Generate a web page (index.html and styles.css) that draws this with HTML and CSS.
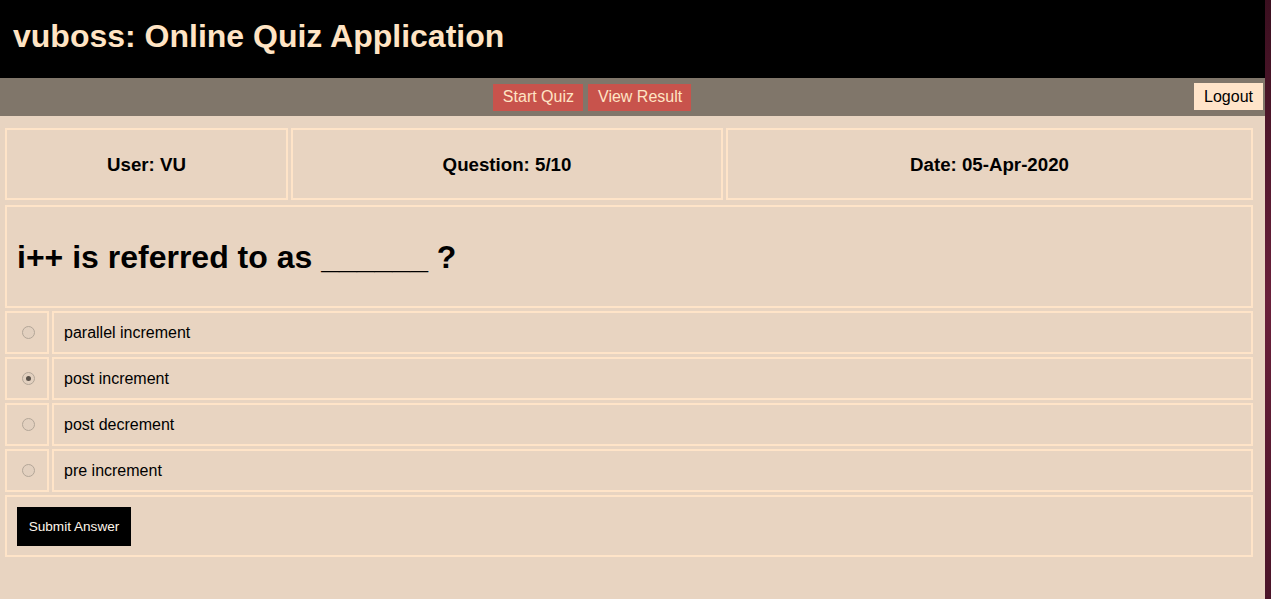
FILE: index.html
```html
<!DOCTYPE html>
<html>
<head>
<meta charset="utf-8">
<title>vuboss: Online Quiz Application</title>
<link rel="stylesheet" href="styles.css">
</head>
<body>
<div class="page">
  <header class="top">
    <h1 class="title">vuboss: Online Quiz Application</h1>
  </header>
  <nav class="nav">
    <div class="nav-center">
      <a class="nav-btn">Start Quiz</a>
      <a class="nav-btn">View Result</a>
    </div>
    <a class="logout">Logout</a>
  </nav>
  <main class="content">
    <div class="row info">
      <div class="cell c-user">User: VU</div>
      <div class="cell c-question">Question: 5/10</div>
      <div class="cell c-date">Date: 05-Apr-2020</div>
    </div>
    <div class="row">
      <div class="cell qtext">i++ is referred to as ______ ?</div>
    </div>
    <div class="options">
      <div class="row opt">
        <div class="cell radio-cell"><input type="radio" name="ans" class="radio"></div>
        <div class="cell opt-text">parallel increment</div>
      </div>
      <div class="row opt">
        <div class="cell radio-cell"><input type="radio" name="ans" class="radio" checked></div>
        <div class="cell opt-text">post increment</div>
      </div>
      <div class="row opt">
        <div class="cell radio-cell"><input type="radio" name="ans" class="radio"></div>
        <div class="cell opt-text">post decrement</div>
      </div>
      <div class="row opt">
        <div class="cell radio-cell"><input type="radio" name="ans" class="radio"></div>
        <div class="cell opt-text">pre increment</div>
      </div>
    </div>
    <div class="row submit-row">
      <div class="cell submit-cell"><button class="submit">Submit Answer</button></div>
    </div>
  </main>
</div>
</body>
</html>
```
FILE: styles.css
```css
html, body {
  margin: 0;
  padding: 0;
  height: 100%;
}
body {
  background: linear-gradient(180deg, #3a0f1f 0%, #6a1f3a 50%, #4a1428 100%);
  font-family: "Liberation Sans", Arial, sans-serif;
  overflow: hidden;
}
.page {
  width: 1265px;
  height: 599px;
  background: #e8d4c1;
}
.top {
  background: #000;
  height: 78px;
  display: flex;
  align-items: center;
  padding-left: 13px;
  box-sizing: border-box;
}
.title {
  margin: 0;
  color: #ffe4c4;
  font-size: 32px;
  font-weight: bold;
  padding-bottom: 6px;
}
.nav {
  background: #80766a;
  height: 38px;
  display: flex;
  align-items: center;
}
.nav-center {
  flex: 1;
  display: flex;
  justify-content: center;
  gap: 5px;
  padding-right: 10px;
  margin-top: 1px;
}
.nav-btn {
  background: #c8534c;
  color: #ffe4c4;
  font-size: 16px;
  padding: 0 9px 0 10px;
  height: 27px;
  line-height: 25px;
  display: block;
}
.logout {
  margin-right: 2px;
  margin-top: -1px;
  background: #ffe4c9;
  color: #000;
  font-size: 16px;
  height: 27px;
  line-height: 27px;
  padding: 0 10px;
}
.content {
  padding: 12px 0 0 5px;
  width: 1248px;
  display: flex;
  flex-direction: column;
  gap: 5px;
}
.row {
  display: flex;
  gap: 3px;
}
.cell {
  border: 2px solid #ffe4c8;
  box-sizing: border-box;
}
.info .cell {
  height: 72px;
  display: flex;
  align-items: center;
  justify-content: center;
  font-weight: bold;
  font-size: 18.7px;
  color: #000;
  padding-top: 2px;
}
.c-user { width: 283px; }
.c-question { width: 432px; }
.c-date { flex: 1; }
.qtext {
  flex: 1;
  height: 103px;
  display: flex;
  align-items: center;
  padding-left: 10px;
  font-size: 32px;
  font-weight: bold;
  color: #000;
  padding-top: 1px;
}
.options {
  display: flex;
  flex-direction: column;
  gap: 3px;
  margin-top: -2px;
}
.opt .cell {
  height: 43px;
}
.radio-cell {
  width: 44px;
  display: flex;
  align-items: center;
  justify-content: center;
}
.radio {
  appearance: none;
  -webkit-appearance: none;
  margin: 0 0 0 2px;
  width: 13px;
  height: 13px;
  border-radius: 50%;
  border: 1px solid #b3a698;
  background: #e2d0bf;
  box-sizing: border-box;
  display: grid;
  place-content: center;
}
.radio:checked::before {
  content: "";
  width: 5px;
  height: 5px;
  border-radius: 50%;
  background: #585048;
}
.opt-text {
  flex: 1;
  display: flex;
  align-items: center;
  padding-left: 10px;
  font-size: 16px;
  color: #000;
}
.submit-row {
  margin-top: -2px;
}
.submit-cell {
  flex: 1;
  height: 62px;
  padding: 10px 0 0 10px;
}
.submit {
  background: #000;
  color: #fff6ea;
  border: none;
  font-family: "Liberation Sans", Arial, sans-serif;
  font-size: 13.6px;
  width: 114px;
  height: 39px;
  padding: 0;
  margin: 0;
}
```
